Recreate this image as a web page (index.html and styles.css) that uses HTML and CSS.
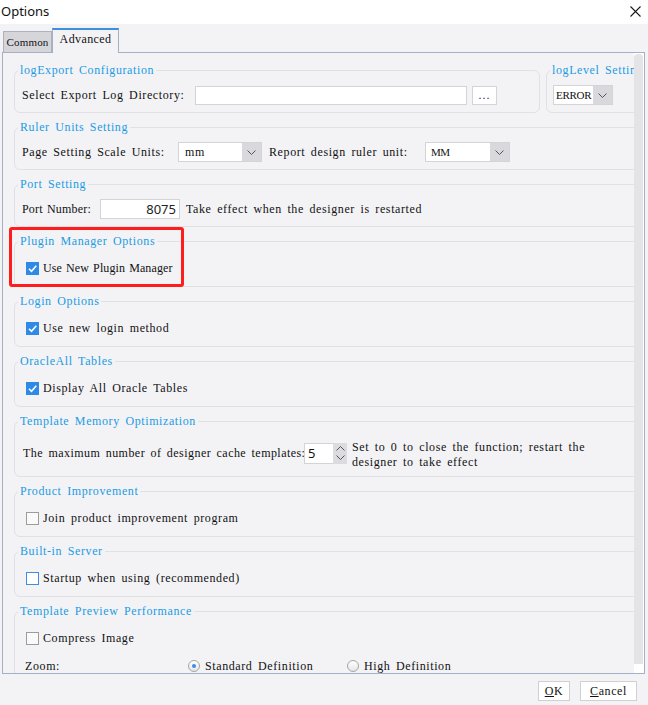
FILE: index.html
```html
<!DOCTYPE html>
<html lang="en">
<head>
    <meta charset="UTF-8">
    <meta name="viewport" content="width=device-width, initial-scale=1.0">
    <title>Options</title>
    <link rel="stylesheet" href="styles.css">
</head>
<body>
    <div class="titlebar">
        <span class="title">Options</span>
        <svg class="close" width="11" height="11" viewBox="0 0 11 11" aria-label="Close">
            <path d="M0.5 0.5L10.5 10.5M10.5 0.5L0.5 10.5" stroke="#1a1a1a" stroke-width="1.1" fill="none"/>
        </svg>
    </div>

    <div class="tabs">
        <div class="tab">Common</div>
        <div class="tab active">Advanced</div>
    </div>

    <div class="panel">
        <div class="content">
            <div class="pair">
                <fieldset class="group export">
                    <legend>logExport Configuration</legend>
                    <div class="row">
                        <span class="label w-dir">Select Export Log Directory:</span>
                        <span class="field dir"></span>
                        <span class="browse">...</span>
                    </div>
                </fieldset>
                <fieldset class="group level">
                    <legend>logLevel Setting</legend>
                    <div class="row tight">
                        <span class="select sel-level">
                            <span class="value">ERROR</span>
                            <span class="arrow"><svg width="9" height="5" viewBox="0 0 9 5"><path d="M0.5 0.5L4.5 4.5L8.5 0.5" stroke="#555" fill="none"/></svg></span>
                        </span>
                    </div>
                </fieldset>
            </div>

            <fieldset class="group">
                <legend>Ruler Units Setting</legend>
                <div class="row">
                    <span class="label w-unit">Page Setting Scale Units:</span>
                    <span class="select sel-unit">
                        <span class="value">mm</span>
                        <span class="arrow"><svg width="9" height="5" viewBox="0 0 9 5"><path d="M0.5 0.5L4.5 4.5L8.5 0.5" stroke="#555" fill="none"/></svg></span>
                    </span>
                    <span class="label after w-unit">Report design ruler unit:</span>
                    <span class="select sel-ruler">
                        <span class="value">MM</span>
                        <span class="arrow"><svg width="9" height="5" viewBox="0 0 9 5"><path d="M0.5 0.5L4.5 4.5L8.5 0.5" stroke="#555" fill="none"/></svg></span>
                    </span>
                </div>
            </fieldset>

            <fieldset class="group">
                <legend>Port Setting</legend>
                <div class="row">
                    <span class="label w-port">Port Number:</span>
                    <span class="field port">8075</span>
                    <span class="label after-port">Take effect when the designer is restarted</span>
                </div>
            </fieldset>

            <fieldset class="group marked">
                <legend>Plugin Manager Options</legend>
                <div class="row check-row">
                    <span class="box on"><svg width="11" height="11" viewBox="0 0 11 11"><path d="M2 5.8L4.5 8.3L9.3 2.8" stroke="#fff" stroke-width="1.6" fill="none"/></svg></span>
                    <span class="snug">Use New Plugin Manager</span>
                </div>
                <div class="highlight"></div>
            </fieldset>

            <fieldset class="group">
                <legend>Login Options</legend>
                <div class="row check-row">
                    <span class="box on"><svg width="11" height="11" viewBox="0 0 11 11"><path d="M2 5.8L4.5 8.3L9.3 2.8" stroke="#fff" stroke-width="1.6" fill="none"/></svg></span>
                    <span>Use new login method</span>
                </div>
            </fieldset>

            <fieldset class="group">
                <legend>OracleAll Tables</legend>
                <div class="row check-row">
                    <span class="box on"><svg width="11" height="11" viewBox="0 0 11 11"><path d="M2 5.8L4.5 8.3L9.3 2.8" stroke="#fff" stroke-width="1.6" fill="none"/></svg></span>
                    <span>Display All Oracle Tables</span>
                </div>
            </fieldset>

            <fieldset class="group">
                <legend>Template Memory Optimization</legend>
                <div class="row memory">
                    <span class="label w-cache">The maximum number of designer cache templates:</span>
                    <span class="spin">
                        <span class="num">5</span>
                        <span class="spin-btns">
                            <svg width="9" height="5" viewBox="0 0 9 5"><path d="M0.5 4.5L4.5 0.5L8.5 4.5" stroke="#555" fill="none"/></svg>
                            <svg width="9" height="5" viewBox="0 0 9 5"><path d="M0.5 0.5L4.5 4.5L8.5 0.5" stroke="#555" fill="none"/></svg>
                        </span>
                    </span>
                    <span class="note">Set to 0 to close the function; restart the<br>designer to take effect</span>
                </div>
            </fieldset>

            <fieldset class="group">
                <legend>Product Improvement</legend>
                <div class="row check-row">
                    <span class="box"></span>
                    <span>Join product improvement program</span>
                </div>
            </fieldset>

            <fieldset class="group">
                <legend>Built-in Server</legend>
                <div class="row check-row">
                    <span class="box hover"></span>
                    <span>Startup when using (recommended)</span>
                </div>
            </fieldset>

            <fieldset class="group">
                <legend>Template Preview Performance</legend>
                <div class="row check-row">
                    <span class="box"></span>
                    <span>Compress Image</span>
                </div>
                <div class="row zoom-row">
                    <span class="zoom-label">Zoom:</span>
                    <span class="radio on"></span>
                    <span class="radio-text">Standard Definition</span>
                    <span class="radio"></span>
                    <span>High Definition</span>
                </div>
            </fieldset>
        </div>
        <div class="scrollbar"><div class="thumb"></div></div>
    </div>

    <div class="buttons">
        <button class="btn ok"><u>O</u>K</button>
        <button class="btn cancel"><u>C</u>ancel</button>
    </div>
</body>
</html>
```

FILE: styles.css
```css
:root {
    --bg-color: #f3f3f6;
    --panel-border: #a3b0c6;
    --group-border: #e0e0e5;
    --legend-color: #229be3;
    --field-border: #d3d3d8;
    --check-blue: #2e8ae6;
    --text-color: #111;
    --ui-font: 'Liberation Serif', 'Noto Sans CJK SC', serif;
}

body {
    margin: 0;
    width: 648px;
    height: 705px;
    overflow: hidden;
    background-color: var(--bg-color);
    font-family: var(--ui-font);
    font-size: 12px;
    letter-spacing: 0.6px;
    word-spacing: 2px;
    color: var(--text-color);
}

.titlebar {
    height: 24px;
    background-color: #fff;
    display: flex;
    align-items: center;
    justify-content: space-between;
    padding: 0 7px 2px 1px;
    box-sizing: border-box;
}

.title {
    font-family: 'Noto Sans', sans-serif;
    font-size: 13px;
    letter-spacing: 0;
    word-spacing: 0;
}

.tabs {
    display: flex;
    align-items: flex-end;
    height: 28px;
    padding-left: 3px;
    position: relative;
    z-index: 1;
}

.tab {
    width: 49px;
    height: 21px;
    box-sizing: border-box;
    border: 1px solid #a9b1c2;
    border-bottom: none;
    background-color: #d6d6da;
    text-align: center;
    line-height: 21px;
    font-size: 11px;
    letter-spacing: 0.2px;
}

.tab.active {
    width: 67px;
    height: 25px;
    margin-bottom: -1px;
    border-top: 2px solid #3d8fe0;
    border-color: #3d8fe0 var(--panel-border) transparent;
    background-color: var(--bg-color);
    line-height: 19px;
    font-size: 12px;
    letter-spacing: 0.4px;
}

.panel {
    margin-left: 2px;
    width: 643px;
    height: 622px;
    box-sizing: border-box;
    border: 1px solid var(--panel-border);
    display: flex;
}

.content {
    width: 631px;
    flex: none;
    box-sizing: border-box;
    padding: 10px 0 0 11px;
    overflow: hidden;
    display: flex;
    flex-direction: column;
    gap: 7px;
}

.scrollbar {
    width: 10px;
    background-color: #fff;
}

.thumb {
    width: 9px;
    height: 610px;
    margin-top: 1px;
    background-color: #e4e4e7;
    border-radius: 4px 4px 0 0;
}

.pair {
    display: flex;
    gap: 6px;
    margin-right: -24px;
    flex-shrink: 0;
}

.group {
    margin: 0 -12px 0 0;
    padding: 0;
    border: 1px solid var(--group-border);
    border-radius: 6px;
    min-width: 0;
    flex-shrink: 0;
    position: relative;
}

.pair .group {
    margin: 0;
}

.export {
    width: 526px;
    flex: none;
    box-sizing: border-box;
}

.level {
    flex: 1;
}

.group legend {
    margin-left: 3px;
    padding: 0 2px;
    line-height: 14px;
    color: var(--legend-color);
    white-space: nowrap;
}

.row {
    display: flex;
    align-items: center;
    height: 20px;
    padding: 8px 7px 7px;
    white-space: nowrap;
}

.row.tight {
    padding-left: 6px;
}

.label {
    flex: none;
}

/* label columns follow the reference's fixed-width font */
.w-dir {
    width: 168px;
}

.w-unit {
    width: 150px;
}

.w-port {
    width: 72px;
    letter-spacing: 0.2px;
    word-spacing: 1px;
}

.w-cache {
    width: 281px;
    letter-spacing: 0.45px;
}

.snug {
    letter-spacing: 0.1px;
    word-spacing: 1px;
}

.label.after {
    margin-left: 7px;
}

.after-port {
    margin-left: 6px;
}

.field {
    height: 19px;
    box-sizing: border-box;
    border: 1px solid var(--field-border);
    background-color: #fff;
}

.dir {
    width: 272px;
    margin-left: 5px;
}

.port {
    width: 80px;
    margin-left: 6px;
    height: 20px;
    text-align: right;
    padding-right: 3px;
    font-family: 'Noto Sans', sans-serif;
    font-size: 13px;
    letter-spacing: 0;
    line-height: 18px;
    color: #222;
}

.browse {
    width: 25px;
    height: 19px;
    margin-left: 5px;
    box-sizing: border-box;
    border: 1px solid var(--field-border);
    background-color: #fff;
    color: #5a2a70;
    text-align: center;
    line-height: 17px;
    letter-spacing: 1px;
}

.select {
    display: flex;
    height: 20px;
    box-sizing: border-box;
    border: 1px solid var(--field-border);
    background-color: #fff;
}

.sel-unit {
    width: 84px;
    margin-left: 6px;
}

.sel-ruler {
    width: 85px;
    margin-left: 6px;
}

.sel-level {
    width: 60px;
}

.select .value {
    flex: 1;
    padding-left: 6px;
    line-height: 18px;
}

.sel-ruler .value {
    padding-left: 5px;
    font-size: 11px;
    letter-spacing: -0.5px;
}

.sel-level .value {
    padding-left: 2px;
    font-size: 11px;
    letter-spacing: -0.3px;
}

.select .arrow {
    width: 19px;
    background-color: #d9d9dd;
    display: flex;
    align-items: center;
    justify-content: center;
}

.check-row {
    padding: 10px 7px 8px;
}

.box {
    width: 13px;
    height: 13px;
    box-sizing: border-box;
    margin: 0 4px;
    border: 1px solid #9c9c9c;
    background-color: #fafafa;
    display: inline-flex;
    align-items: center;
    justify-content: center;
}

.box.on {
    background-color: var(--check-blue);
    border-color: var(--check-blue);
}

.box.hover {
    border-color: #3a8ee6;
    background-color: #fff;
}

.highlight {
    position: absolute;
    left: -6px;
    top: -21px;
    width: 175px;
    height: 60px;
    box-sizing: border-box;
    border: 3px solid #ff1c1c;
    border-radius: 3px;
}

.memory {
    height: 30px;
    padding: 10px 7px 8px 8px;
}

.spin {
    display: flex;
    height: 21px;
}

.spin .num {
    width: 29px;
    box-sizing: border-box;
    border: 1px solid var(--field-border);
    border-right: none;
    background-color: #fff;
    padding-left: 3px;
    font-family: 'Noto Sans', sans-serif;
    font-size: 13px;
    letter-spacing: 0;
    line-height: 19px;
}

.spin-btns {
    width: 14px;
    background-color: #dcdce0;
    display: flex;
    flex-direction: column;
    align-items: center;
    justify-content: space-evenly;
}

.note {
    margin-left: 5px;
    line-height: 15px;
    margin-top: 3px;
}

.zoom-row {
    padding: 0 7px 0 10px;
}

.zoom-label {
    width: 163px;
}

.radio {
    width: 12px;
    height: 12px;
    box-sizing: border-box;
    border: 1px solid #a5a5a5;
    border-radius: 50%;
    background: linear-gradient(#fff, #e6e6e8);
    margin-right: 5px;
    display: inline-flex;
    align-items: center;
    justify-content: center;
}

.radio.on::after {
    content: '';
    width: 4px;
    height: 4px;
    border-radius: 50%;
    background-color: #3a8ee6;
}

.radio-text {
    width: 142px;
}

.buttons {
    display: flex;
    justify-content: flex-end;
    gap: 10px;
    padding: 7px 11px 0 0;
}

.btn {
    height: 20px;
    box-sizing: border-box;
    border: 1px solid #cfcfd4;
    background-color: #fff;
    font-family: var(--ui-font);
    font-size: 12px;
    letter-spacing: 0.6px;
    color: var(--text-color);
    padding: 0;
}

.ok {
    width: 32px;
}

.cancel {
    width: 57px;
}
```
